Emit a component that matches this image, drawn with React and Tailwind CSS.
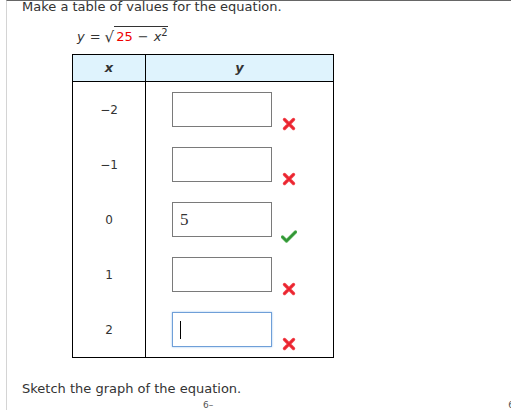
import React from "react";

function XMark() {
  return (
    <svg width="14" height="14" viewBox="0 0 14 14">
      <path d="M2.5 2.5 L11.5 11.5 M11.5 2.5 L2.5 11.5" stroke="#f2444c" strokeWidth="3.4" strokeLinecap="round" />
      <path d="M2.5 2.5 L11.5 11.5 M11.5 2.5 L2.5 11.5" stroke="#e8202c" strokeWidth="1.6" strokeLinecap="round" />
    </svg>
  );
}

function Check() {
  return (
    <svg width="16" height="13" viewBox="0 0 16 13">
      <path d="M1.5 7 L5.5 11 L14.5 2" fill="none" stroke="#4cae4c" strokeWidth="3.2" strokeLinecap="round" strokeLinejoin="round" />
      <path d="M1.5 7 L5.5 11 L14.5 2" fill="none" stroke="#2f8f35" strokeWidth="1.4" strokeLinecap="round" strokeLinejoin="round" />
    </svg>
  );
}

const rows = [
  { x: "\u22122", v: "", mark: "x" },
  { x: "\u22121", v: "", mark: "x" },
  { x: "0", v: "5", mark: "c" },
  { x: "1", v: "", mark: "x" },
  { x: "2", v: "", mark: "x", focus: true },
];

export default function App() {
  return (
    <div className="w-[511px] h-[410px] bg-white overflow-hidden font-['DejaVu_Sans',sans-serif] text-[#333]">
      <div className="ml-[6px] h-full border-l border-[#d4d4d4] border-t border-t-[#666]">
        <div className="pl-[15px] -mt-[2px] text-[13px] leading-[16px] text-[#333]">
          Make a table of values for the equation.
        </div>
        <div className="ml-[70px] mt-[10px] flex items-end text-[13px] leading-[16px] h-[20px]">
          <span className="italic text-[#333]">y</span>
          <span className="ml-[5px] text-[#333]">=</span>
          <span className="ml-[4px] text-[#333] text-[15px]">√</span>
          <span className="border-t border-[#333] pt-[1px] flex items-end">
            <span className="text-[#ee0000] ml-[2px]">25</span>
            <span className="ml-[5px] text-[#333]">−</span>
            <span className="ml-[5px] italic text-[#333]">x</span>
            <span className="text-[10px] leading-[10px] mb-[7px] text-[#333]">2</span>
          </span>
        </div>
        <div className="ml-[65px] mt-[9px] w-[262px] border border-black">
          <div className="flex h-[27px] bg-[#dff3fd] border-b border-black">
            <div className="w-[72px] flex items-center justify-center font-bold italic text-[13px] text-[#333]">x</div>
            <div className="flex-1 border-l border-black flex items-center justify-center font-bold italic text-[13px] text-[#333]">y</div>
          </div>
          <div className="flex">
            <div className="w-[72px]">
              {rows.map((r) => (
                <div key={r.x} className="h-[55px] flex items-center justify-center text-[12px] text-[#333]">
                  {r.x}
                </div>
              ))}
            </div>
            <div className="flex-1 border-l border-black">
              {rows.map((r) => (
                <div key={r.x} className="h-[55px] flex items-center pl-[26px]">
                  <div
                    className={
                      r.focus
                        ? "w-[100px] h-[35px] border border-[#6f9fd8] shadow-[0_0_2px_#9cc3ee] flex items-center pl-[7px]"
                        : "w-[100px] h-[35px] border border-[#7a7a7a] flex items-center pl-[7px]"
                    }
                  >
                    {r.v && (
                      <span className="font-['Liberation_Serif',serif] text-[17px] text-[#333]">{r.v}</span>
                    )}
                    {r.focus && <span className="w-px h-[18px] bg-black" />}
                  </div>
                  <div className={r.mark === "c" ? "ml-[9px] self-end mb-[4px]" : "ml-[10px] self-end mb-[6px]"}>
                    {r.mark === "c" ? <Check /> : <XMark />}
                  </div>
                </div>
              ))}
            </div>
          </div>
        </div>
        <div className="pl-[15px] mt-[23px] text-[13px] leading-[16px] text-[#333]">
          Sketch the graph of the equation.
        </div>
        <div className="flex mt-[3px] text-[9px] leading-[10px] text-[#555]">
          <span className="ml-[196px]">6–</span>
          <span className="ml-auto -mr-[3px]">6</span>
        </div>
      </div>
    </div>
  );
}
